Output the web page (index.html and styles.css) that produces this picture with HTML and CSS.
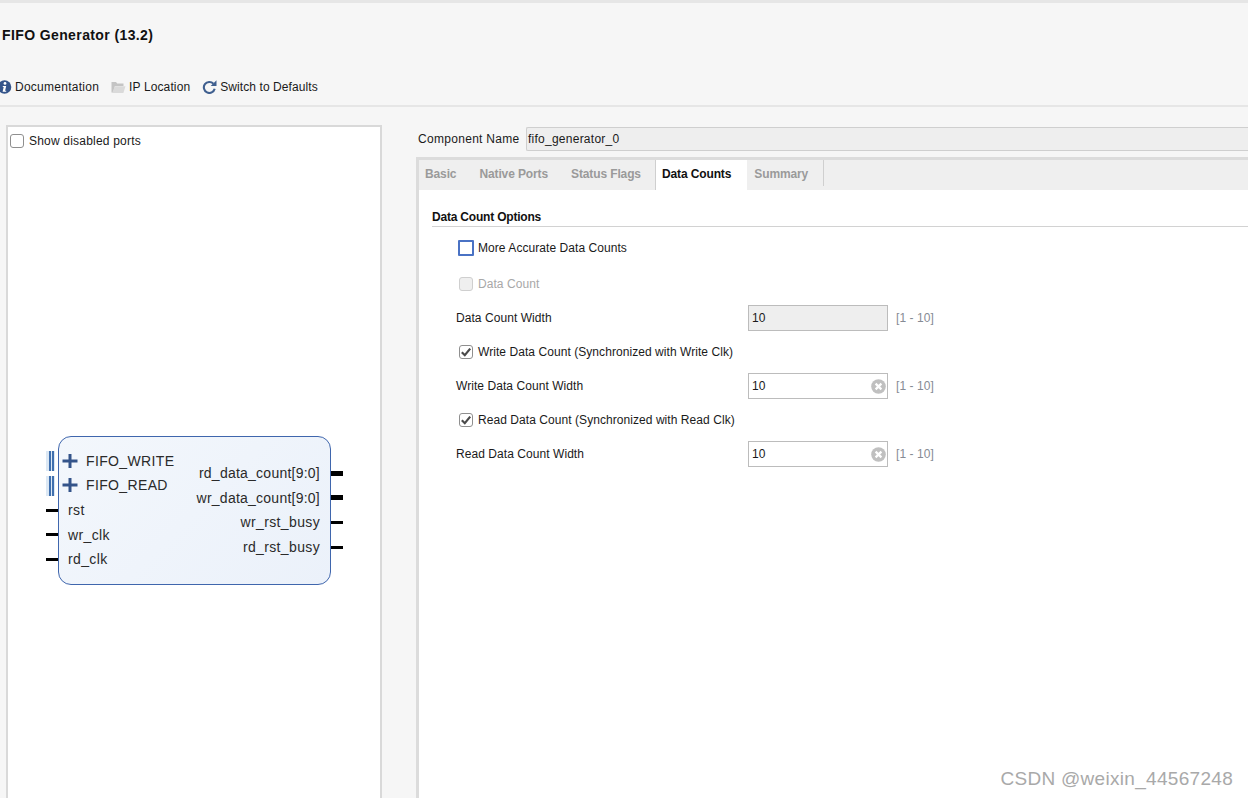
FILE: index.html
```html
<!DOCTYPE html>
<html lang="en">
<head>
<meta charset="utf-8">
<title>FIFO Generator</title>
<link rel="stylesheet" href="styles.css">
</head>
<body>
<div class="app">
  <header class="header">
    <h1 class="title">FIFO Generator (13.2)</h1>
    <div class="toolbar">
      <span class="tool tool-doc">
        <svg class="tool-icon" width="12" height="14" viewBox="0 0 12 14"><circle cx="4.500" cy="7" r="6.800" fill="#34548a"/><circle cx="5" cy="3.400" r="1.400" fill="#fff"/><path d="M2.800 6h3.400l-1.100 4.800h1.100v1H2.600l1.100-4.800h-.9z" fill="#fff"/></svg>
        Documentation
      </span>
      <span class="tool tool-ip">
        <svg class="tool-icon" width="15" height="14" viewBox="0 0 15 14"><path d="M0.500 2h4.500l1.200 1.400h6.300v2.600H4L2 12.500H.5z" fill="#c4c4c4"/><path d="M3.800 6.300h10.700L12.400 13H1.200z" fill="#dadada"/></svg>
        IP Location
      </span>
      <span class="tool tool-switch">
        <svg class="tool-icon" width="15" height="14" viewBox="0 0 15 14"><path d="M11.400 3.700A5.500 5.500 0 1 0 12.700 8.800" fill="none" stroke="#3f5f8f" stroke-width="2.100"/><path d="M8.700 6h5.800V.2z" fill="#3f5f8f"/></svg>
        Switch to Defaults
      </span>
    </div>
  </header>
  <main class="main">
    <section class="preview">
      <label class="show-ports"><span class="check"></span>Show disabled ports</label>
      <div class="symbol">
        <div class="ports ports-left">
          <div class="port bus"><span class="bus-mark"></span><svg class="plus" width="16" height="16" viewBox="0 0 16 16"><path d="M8 1v14M.5 8h15" stroke="#34548a" stroke-width="3"/></svg>FIFO_WRITE</div>
          <div class="port bus"><span class="bus-mark"></span><svg class="plus" width="16" height="16" viewBox="0 0 16 16"><path d="M8 1v14M.5 8h15" stroke="#34548a" stroke-width="3"/></svg>FIFO_READ</div>
          <div class="port pin-in">rst</div>
          <div class="port pin-in">wr_clk</div>
          <div class="port pin-in">rd_clk</div>
        </div>
        <div class="ports ports-right">
          <div class="port pin-out bold-pin">rd_data_count[9:0]</div>
          <div class="port pin-out bold-pin">wr_data_count[9:0]</div>
          <div class="port pin-out">wr_rst_busy</div>
          <div class="port pin-out">rd_rst_busy</div>
        </div>
      </div>
    </section>
    <section class="config">
      <div class="name-row">
        <span class="name-label">Component Name</span>
        <div class="name-field">fifo_generator_0</div>
      </div>
      <div class="tabs-panel">
        <nav class="tabs">
          <span class="tab tab-basic">Basic</span>
          <span class="tab">Native Ports</span>
          <span class="tab tab-status">Status Flags</span>
          <span class="tab tab-active">Data Counts</span>
          <span class="tab tab-summary">Summary</span>
        </nav>
        <div class="tab-body">
          <h2 class="group-title">Data Count Options</h2>
          <div class="row row-check row-first"><span class="check check-focus"></span>More Accurate Data Counts</div>
          <div class="row row-check row-disabled"><span class="check check-disabled"></span>Data Count</div>
          <div class="row row-field">
            <span class="field-label">Data Count Width</span>
            <div class="field field-disabled">10</div>
            <span class="range">[1 - 10]</span>
          </div>
          <div class="row row-check"><span class="check"><svg width="12" height="12" viewBox="0 0 12 12"><path d="M1.800 6.200 4.800 9.200 10.200 2.600" fill="none" stroke="#4a4a4a" stroke-width="2.200"/></svg></span>Write Data Count (Synchronized with Write Clk)</div>
          <div class="row row-field">
            <span class="field-label">Write Data Count Width</span>
            <div class="field">10<svg class="clear" width="15" height="15" viewBox="0 0 15 15"><circle cx="7.500" cy="7.500" r="7.300" fill="#c0c0c0"/><path d="M4.600 4.600l5.800 5.800M10.400 4.600l-5.800 5.800" stroke="#fff" stroke-width="2.200"/></svg></div>
            <span class="range">[1 - 10]</span>
          </div>
          <div class="row row-check"><span class="check"><svg width="12" height="12" viewBox="0 0 12 12"><path d="M1.800 6.200 4.800 9.200 10.200 2.600" fill="none" stroke="#4a4a4a" stroke-width="2.200"/></svg></span>Read Data Count (Synchronized with Read Clk)</div>
          <div class="row row-field">
            <span class="field-label">Read Data Count Width</span>
            <div class="field">10<svg class="clear" width="15" height="15" viewBox="0 0 15 15"><circle cx="7.500" cy="7.500" r="7.300" fill="#c0c0c0"/><path d="M4.600 4.600l5.800 5.800M10.400 4.600l-5.800 5.800" stroke="#fff" stroke-width="2.200"/></svg></div>
            <span class="range">[1 - 10]</span>
          </div>
        </div>
      </div>
    </section>
  </main>
  <div class="watermark">CSDN @weixin_44567248</div>
</div>
</body>
</html>
```

FILE: styles.css
```css
* { box-sizing: border-box; }
html, body { margin: 0; padding: 0; }
body {
  width: 1248px;
  height: 798px;
  overflow: hidden;
  background: #f6f6f6;
  color: #1a1a1a;
  font-family: "Liberation Sans", Arial, sans-serif;
  font-size: 12px;
  letter-spacing: 0.2px;
}
.app {
  position: relative;
  display: flex;
  flex-direction: column;
  width: 1248px;
  height: 798px;
  overflow: hidden;
  border-top: 3px solid #e6e6e6;
}
.header {
  flex: none;
  height: 104px;
  border-bottom: 2px solid #e6e6e6;
  padding-top: 24px;
}
.title {
  margin: 0 0 0 2px;
  font-size: 14px;
  line-height: 16px;
  font-weight: bold;
  letter-spacing: 0.39px;
  color: #111;
}
.toolbar {
  display: flex;
  align-items: center;
  height: 16px;
  margin-top: 36px;
}
.tool { display: flex; align-items: center; white-space: nowrap; }
.tool-icon { flex: none; margin-right: 3px; }
.tool-doc { letter-spacing: 0.26px; }
.tool-ip { margin-left: 12px; letter-spacing: 0.12px; }
.tool-switch { margin-left: 12px; letter-spacing: 0.08px; }
.main { flex: 1; display: flex; min-height: 0; }
.preview {
  position: relative;
  flex: none;
  width: 376px;
  margin: 18px 0 0 6px;
  background: #fff;
  border: 2px solid #d9d9d9;
  border-bottom: 0;
}
.show-ports {
  display: flex;
  align-items: center;
  margin: 6px 0 0 2px;
  height: 16px;
}
.check {
  flex: none;
  display: flex;
  align-items: center;
  justify-content: center;
  width: 14px;
  height: 14px;
  margin-right: 5px;
  background: #fff;
  border: 1px solid #8f8f8f;
  border-radius: 3px;
}
.check-focus {
  width: 16px;
  height: 16px;
  margin: 0 4px 0 -1px;
  border: 2px solid #4a72c4;
  border-radius: 1px;
}
.check-disabled { background: #efefef; border-color: #cfcfcf; }
.symbol {
  position: absolute;
  left: 50px;
  top: 309px;
  display: flex;
  justify-content: space-between;
  width: 273px;
  height: 149px;
  background: linear-gradient(135deg, #f3f7fc, #ebf1fa);
  border: 1px solid #3f66ad;
  border-radius: 13px;
  font-size: 14px;
  letter-spacing: 0.36px;
  color: #2a2a2a;
}
.ports { display: flex; flex-direction: column; }
.ports-left { padding: 11.300px 0 0 3px; }
.ports-right { padding: 23.500px 10px 0 0; align-items: flex-end; }
.port { position: relative; display: flex; align-items: center; height: 24.700px; white-space: nowrap; }
.plus { margin-right: 8px; }
.pin-in { margin-left: 6px; }
.pin-in::before {
  content: "";
  position: absolute;
  left: -22px;
  top: 11px;
  width: 12px;
  height: 3px;
  background: #000;
}
.pin-out::after {
  content: "";
  position: absolute;
  right: -23px;
  top: 11px;
  width: 12px;
  height: 3px;
  background: #000;
}
.bold-pin { letter-spacing: 0.24px; }
.bold-pin::after { height: 5px; top: 10px; }
.bus-mark {
  position: absolute;
  left: -16px;
  top: 3px;
  width: 9px;
  height: 20px;
  background: linear-gradient(90deg, #dce8f4 0 3px, #3f6fae 3px 5px, #dce8f4 5px 6px, #3f6fae 6px 8px, #dce8f4 8px);
}
.config { flex: 1; min-width: 0; margin-left: 34px; display: flex; flex-direction: column; }
.name-row { display: flex; align-items: center; height: 24px; margin: 20px 0 0 2px; }
.name-label { flex: none; width: 108px; letter-spacing: 0.3px; }
.name-field {
  flex: 1;
  height: 24px;
  line-height: 22px;
  padding-left: 1px;
  letter-spacing: 0.25px;
  background: #eeeeee;
  border: 1px solid #cfcfcf;
  border-right: 0;
  border-radius: 2px 0 0 2px;
}
.tabs-panel {
  flex: 1;
  margin-top: 6px;
  display: flex;
  flex-direction: column;
  border-top: 3px solid #dcdcdc;
  border-left: 3px solid #dcdcdc;
  min-height: 0;
}
.tabs { flex: none; display: flex; height: 30px; background: #efefef; letter-spacing: -0.12px; }
.tab {
  display: flex;
  align-items: center;
  height: 26px;
  padding: 1px 12px 0 11px;
  font-weight: bold;
  color: #9a9a9a;
  white-space: nowrap;
}
.tab-basic { padding-left: 6px; padding-right: 12px; }
.tab-status { padding-right: 14px; }
.tab-active {
  height: 30px;
  padding: 1px 16px 3px 6px;
  background: #fff;
  border-left: 1px solid #cfcfcf;
  color: #111;
}
.tab-summary { padding: 1px 15px 0 7px; border-right: 1px solid #cfcfcf; }
.tab-body { flex: 1; background: #fff; padding: 20px 0 0 13px; letter-spacing: 0.06px; }
.group-title {
  margin: 0;
  height: 17px;
  font-size: 12px;
  line-height: 14px;
  font-weight: bold;
  letter-spacing: -0.2px;
  color: #111;
  border-bottom: 1px solid #d2d2d2;
}
.row { display: flex; align-items: center; white-space: nowrap; }
.row-check { height: 16px; margin: 13px 0 0 27px; }
.row-disabled { margin-top: 20px; color: #a8a8a8; }
.row-field { height: 26px; margin: 13px 0 0 24px; }
.field-label { flex: none; width: 292px; }
.field {
  display: flex;
  align-items: center;
  justify-content: space-between;
  width: 140px;
  height: 26px;
  padding: 0 1px 0 3px;
  background: #fff;
  border: 1px solid #bcbcbc;
}
.field-disabled { background: #eeeeee; }
.clear { flex: none; }
.range { margin-left: 8px; color: #868b94; }
.watermark {
  position: absolute;
  right: 15px;
  bottom: 8px;
  font-size: 19px;
  letter-spacing: 0.3px;
  color: #a9a9a9;
}
```
